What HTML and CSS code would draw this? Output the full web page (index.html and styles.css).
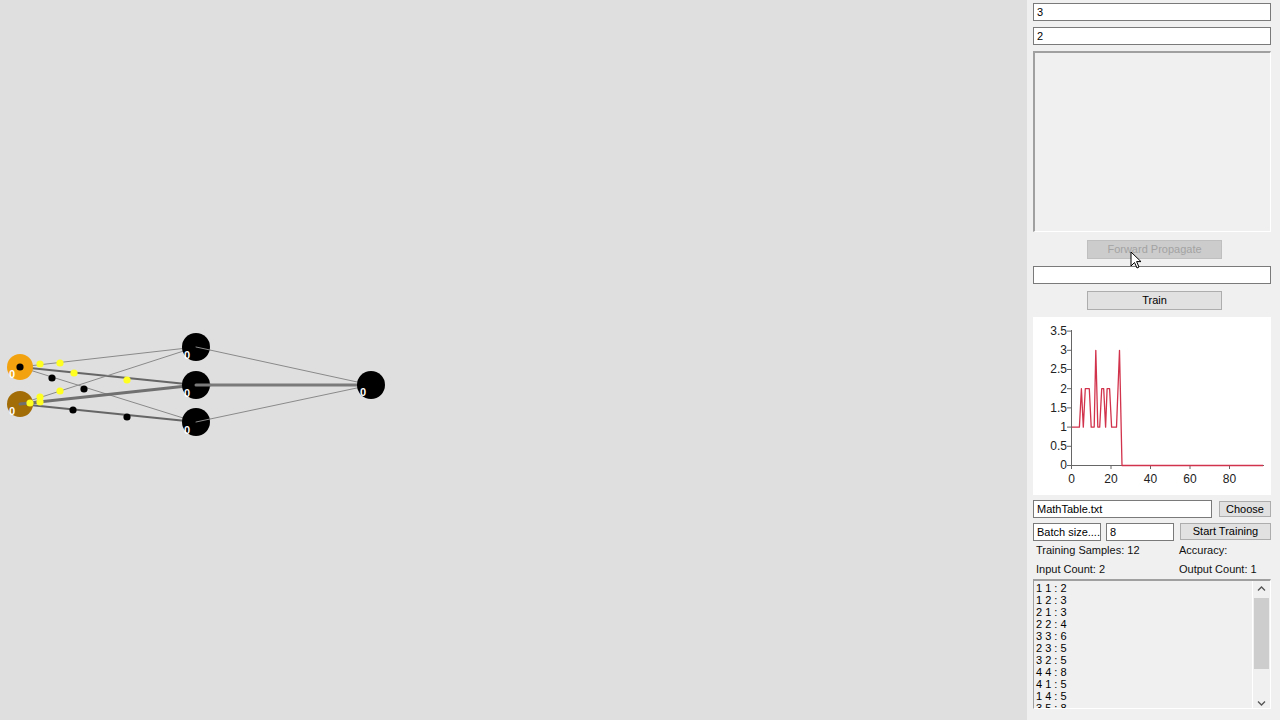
FILE: index.html
```html
<!DOCTYPE html>
<html>
<head>
<meta charset="utf-8">
<link rel="stylesheet" href="styles.css">
</head>
<body>
<div class="app">
  <div class="canvas">
    <svg class="net" width="1027" height="720" viewBox="0 0 1027 720">
      <g stroke-linecap="round">
        <line x1="20" y1="367" x2="196" y2="347" stroke="#8a8a8a" stroke-width="1"/>
        <line x1="20" y1="367" x2="196" y2="385" stroke="#666" stroke-width="2"/>
        <line x1="20" y1="367" x2="196" y2="422" stroke="#8a8a8a" stroke-width="1"/>
        <line x1="20" y1="404" x2="196" y2="347" stroke="#8a8a8a" stroke-width="1"/>
        <line x1="20" y1="404" x2="196" y2="385" stroke="#707070" stroke-width="3"/>
        <line x1="20" y1="404" x2="196" y2="422" stroke="#666" stroke-width="2"/>
        <line x1="196" y1="347" x2="371" y2="385" stroke="#8a8a8a" stroke-width="1"/>
        <line x1="196" y1="385" x2="371" y2="385" stroke="#7a7a7a" stroke-width="3"/>
        <line x1="196" y1="422" x2="371" y2="385" stroke="#8a8a8a" stroke-width="1"/>
      </g>
      <circle cx="20" cy="367" r="13" fill="#f2a20f"/>
      <circle cx="20" cy="404" r="13" fill="#a26c07"/>
      <circle cx="196" cy="347" r="14" fill="#000"/>
      <circle cx="196" cy="385" r="14" fill="#000"/>
      <circle cx="196" cy="422" r="14" fill="#000"/>
      <circle cx="371" cy="385" r="14" fill="#000"/>
      <g stroke-linecap="round">
        <line x1="20" y1="404" x2="40" y2="402" stroke="#707070" stroke-width="3"/>
        <line x1="196" y1="385" x2="210" y2="385" stroke="#7a7a7a" stroke-width="3"/>
        <line x1="196" y1="347" x2="210" y2="350" stroke="#8a8a8a" stroke-width="1"/>
        <line x1="196" y1="422" x2="210" y2="419" stroke="#8a8a8a" stroke-width="1"/>
      </g>
      <g fill="#ffff22">
        <circle cx="40" cy="364" r="3.6"/>
        <circle cx="60" cy="363" r="3.6"/>
        <circle cx="74" cy="373" r="3.6"/>
        <circle cx="127" cy="380" r="3.6"/>
        <circle cx="60" cy="391" r="3.6"/>
        <circle cx="40" cy="397" r="3.6"/>
        <circle cx="40" cy="402" r="3.6"/>
        <circle cx="30" cy="403" r="3.6"/>
      </g>
      <g fill="#000">
        <circle cx="20" cy="367" r="3.6"/>
        <circle cx="52" cy="378" r="3.6"/>
        <circle cx="84" cy="389" r="3.6"/>
        <circle cx="73" cy="410" r="3.6"/>
        <circle cx="127" cy="417" r="3.6"/>
      </g>
      <g class="nlabel">
        <text x="9" y="378">0</text>
        <text x="9" y="415">0</text>
        <text x="184" y="359">0</text>
        <text x="184" y="397">0</text>
        <text x="184" y="434">0</text>
        <text x="360" y="396">0</text>
      </g>
    </svg>
  </div>
  <div class="panel">
    <div class="tb">3</div>
    <div class="tb gap6">2</div>
    <div class="group"></div>
    <div class="btn btn-wide disabled fp">Forward Propagate</div>
    <div class="tb gap7"></div>
    <div class="btn btn-wide train">Train</div>
    <div class="chart">
      <svg width="238" height="178" viewBox="0 0 238 178">
        <g class="axis" stroke="#666" stroke-width="1" fill="none">
          <line x1="38.5" y1="13" x2="38.5" y2="148.5"/>
          <line x1="38" y1="148.5" x2="231" y2="148.5"/>
          <line x1="34" y1="14.1" x2="38" y2="14.1"/>
          <line x1="34" y1="33.3" x2="38" y2="33.3"/>
          <line x1="34" y1="52.5" x2="38" y2="52.5"/>
          <line x1="34" y1="71.7" x2="38" y2="71.7"/>
          <line x1="34" y1="90.9" x2="38" y2="90.9"/>
          <line x1="34" y1="110.1" x2="38" y2="110.1"/>
          <line x1="34" y1="129.3" x2="38" y2="129.3"/>
          <line x1="34" y1="148.5" x2="38" y2="148.5"/>
          <line x1="38.5" y1="148" x2="38.5" y2="152"/>
          <line x1="78" y1="148" x2="78" y2="152"/>
          <line x1="117.5" y1="148" x2="117.5" y2="152"/>
          <line x1="157" y1="148" x2="157" y2="152"/>
          <line x1="196.5" y1="148" x2="196.5" y2="152"/>
        </g>
        <g class="ylab" text-anchor="end">
          <text x="34" y="18">3.5</text>
          <text x="34" y="37">3</text>
          <text x="34" y="56">2.5</text>
          <text x="34" y="76">2</text>
          <text x="34" y="95">1.5</text>
          <text x="34" y="114">1</text>
          <text x="34" y="133">0.5</text>
          <text x="34" y="152">0</text>
        </g>
        <g class="ylab" text-anchor="middle">
          <text x="38.5" y="166">0</text>
          <text x="78" y="166">20</text>
          <text x="117.5" y="166">40</text>
          <text x="157" y="166">60</text>
          <text x="196.5" y="166">80</text>
        </g>
        <polyline fill="none" stroke="#d2334c" stroke-width="1.3" stroke-linejoin="round"
          points="39,110.1 46.4,110.1 48.4,71.7 50.3,110.1 52.3,71.7 56.3,71.7 58.2,110.1 61.2,110.1 62.8,33.3 64.8,110.1 66.7,110.1 68.7,71.7 70.7,71.7 72.6,110.1 74.1,71.7 76.6,71.7 78.6,110.1 83.5,110.1 86.5,33.3 89,148.5 230,148.5"/>
      </svg>
    </div>
    <div class="row mathrow">
      <div class="tb file">MathTable.txt</div>
      <div class="btn choose">Choose</div>
    </div>
    <div class="row batchrow">
      <div class="tb small">Batch size....</div>
      <div class="tb small gap5">8</div>
      <div class="btn start">Start Training</div>
    </div>
    <div class="row lbl">
      <span class="lcol">Training Samples: 12</span>
      <span>Accuracy:</span>
    </div>
    <div class="row lbl">
      <span class="lcol">Input Count: 2</span>
      <span>Output Count: 1</span>
    </div>
    <div class="listbox">
      <div class="items">
        <div>1 1 : 2</div>
        <div>1 2 : 3</div>
        <div>2 1 : 3</div>
        <div>2 2 : 4</div>
        <div>3 3 : 6</div>
        <div>2 3 : 5</div>
        <div>3 2 : 5</div>
        <div>4 4 : 8</div>
        <div>4 1 : 5</div>
        <div>1 4 : 5</div>
        <div>3 5 : 8</div>
      </div>
      <div class="scroll">
        <svg class="arr" width="15" height="10" viewBox="0 0 15 10"><path d="M4 6.5 L7.5 3 L11 6.5" fill="none" stroke="#555" stroke-width="1.3"/></svg>
        <div class="track"><div class="thumb"></div></div>
        <svg class="arr" width="15" height="10" viewBox="0 0 15 10"><path d="M4 3.5 L7.5 7 L11 3.5" fill="none" stroke="#555" stroke-width="1.3"/></svg>
      </div>
    </div>
  </div>
  <svg class="cursor" width="14" height="20" viewBox="0 0 14 20">
    <path d="M1 1 L1 15 L4.5 11.5 L7 17 L9 16 L6.6 10.6 L11 10.6 Z" fill="#fff" stroke="#000" stroke-width="1" stroke-linejoin="round"/>
  </svg>
</div>
</body>
</html>
```

FILE: styles.css
```css
html, body {
  margin: 0;
  padding: 0;
  width: 1280px;
  height: 720px;
  overflow: hidden;
  font-family: "Liberation Sans", Arial, sans-serif;
  font-size: 11px;
  color: #000;
}

.app {
  position: relative;
  display: flex;
  width: 1280px;
  height: 720px;
}

.canvas {
  width: 1027px;
  height: 720px;
  background: #dfdfdf;
  flex: none;
}

.net {
  display: block;
}

.nlabel text {
  font-family: "Liberation Sans", Arial, sans-serif;
  font-size: 11px;
  font-weight: bold;
  fill: #ffffff;
}

.panel {
  width: 253px;
  height: 720px;
  background: #f0f0f0;
  box-sizing: border-box;
  padding: 3px 9px 0 6px;
  display: flex;
  flex-direction: column;
  flex: none;
}

.tb {
  height: 18px;
  box-sizing: border-box;
  border: 1px solid #7a7a7a;
  background: #fff;
  padding-left: 3px;
  line-height: 16px;
  white-space: nowrap;
  overflow: hidden;
}

.gap6 { margin-top: 6px; }
.gap7 { margin-top: 7px; }

.group {
  margin-top: 6px;
  height: 181px;
  box-sizing: border-box;
  border-top: 2px solid #a0a0a0;
  border-left: 2px solid #a0a0a0;
  border-right: 1px solid #fff;
  border-bottom: 1px solid #fff;
  background: #f0f0f0;
}

.btn {
  box-sizing: border-box;
  border: 1px solid #adadad;
  background: #e1e1e1;
  text-align: center;
  white-space: nowrap;
}

.btn-wide {
  width: 135px;
  height: 19px;
  line-height: 17px;
  margin-left: 54px;
}

.disabled {
  background: #cccccc;
  border-color: #bfbfbf;
  color: #a3a3a3;
}

.fp { margin-top: 8px; }
.train { margin-top: 7px; }

.chart {
  margin-top: 7px;
  height: 178px;
  background: #fff;
}

.chart svg {
  display: block;
}

.ylab text {
  font-family: "Liberation Sans", Arial, sans-serif;
  font-size: 12px;
  fill: #222;
}

.row {
  display: flex;
  align-items: flex-start;
}

.mathrow { margin-top: 5px; }

.file { width: 179px; }

.choose {
  width: 52px;
  height: 16px;
  line-height: 14px;
  margin-left: 7px;
  margin-top: 1px;
}

.batchrow { margin-top: 5px; }

.small { width: 68px; }
.gap5 { margin-left: 5px; }

.start {
  width: 91px;
  height: 17px;
  line-height: 15px;
  margin-left: 6px;
}

.lbl {
  height: 19px;
  line-height: 19px;
  padding-left: 3px;
  color: #111;
}

.lcol {
  width: 143px;
}

.listbox {
  height: 130px;
  box-sizing: border-box;
  border-top: 2px solid #a0a0a0;
  border-left: 1px solid #a0a0a0;
  border-right: 1px solid #fff;
  border-bottom: 1px solid #fff;
  background: #f0f0f0;
  display: flex;
  overflow: hidden;
}

.items {
  flex: 1;
  padding: 1px 0 0 2px;
  font-size: 11px;
  line-height: 12px;
  letter-spacing: 0;
  overflow: hidden;
}

.scroll {
  width: 16px;
  margin-right: 1px;
  background: #f0f0f0;
  border-left: 1px solid #fff;
  display: flex;
  flex-direction: column;
  align-items: center;
}

.arr {
  display: block;
  margin-top: 3px;
  flex: none;
}

.track {
  flex: 1;
  width: 15px;
  padding-top: 4px;
  padding-bottom: 26px;
  box-sizing: border-box;
  display: flex;
  flex-direction: column;
}

.thumb {
  flex: 1;
  background: #cdcdcd;
}

.cursor {
  position: absolute;
  left: 1130px;
  top: 251px;
}
```
